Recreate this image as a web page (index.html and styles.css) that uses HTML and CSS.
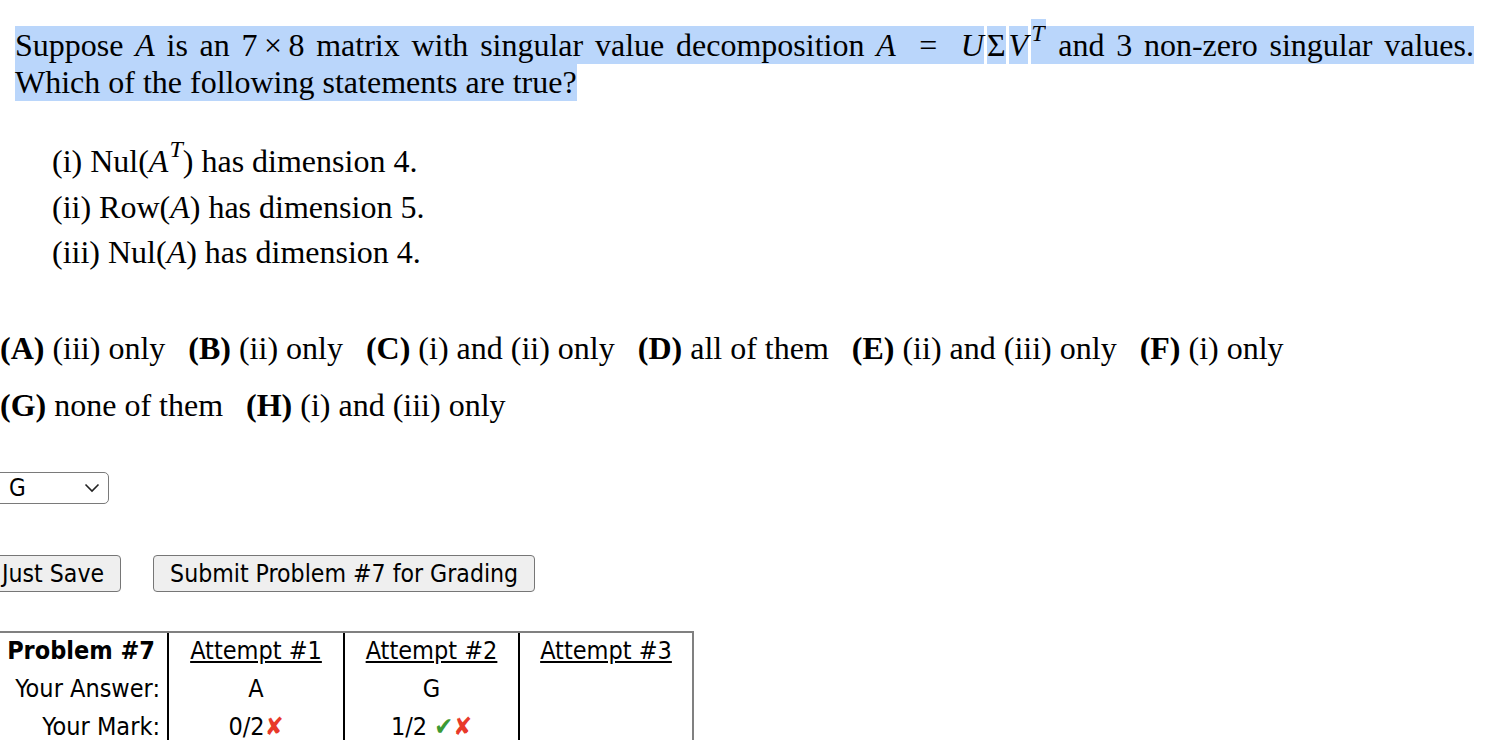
FILE: index.html
```html
<!DOCTYPE html>
<html>
<head>
<meta charset="utf-8">
<link rel="stylesheet" href="styles.css">
</head>
<body>
<div class="page">
  <div class="question"><span class="hl">Suppose <i>A</i> is an 7&thinsp;×&thinsp;8 matrix with singular value decomposition <i>A</i> &nbsp;=&nbsp; <i>U</i></span><span class="hl gap">Σ</span><span class="hl gap"><i>V</i></span><span class="hl gap tsup"><sup class="t">T</sup></span><span class="hl"> and 3 non-zero singular values. Which of the following statements are true?</span></div>

  <div class="statements">
    <div>(i) Nul(<i>A</i><sup class="t2">T</sup>) has dimension 4.</div>
    <div>(ii) Row(<i>A</i>) has dimension 5.</div>
    <div>(iii) Nul(<i>A</i>) has dimension 4.</div>
  </div>

  <div class="options">
    <span class="opt"><b>(A)</b> (iii) only</span> <span class="opt"><b>(B)</b> (ii) only</span> <span class="opt"><b>(C)</b> (i) and (ii) only</span> <span class="opt"><b>(D)</b> all of them</span> <span class="opt"><b>(E)</b> (ii) and (iii) only</span> <span class="opt"><b>(F)</b> (i) only</span><br>
    <span class="opt"><b>(G)</b> none of them</span> <span class="opt"><b>(H)</b> (i) and (iii) only</span>
  </div>

  <div class="select"><span class="sel-val">G</span><svg class="chev" width="16" height="10" viewBox="0 0 16 10"><path d="M1.5 1.5 L8 8 L14.5 1.5" fill="none" stroke="#222" stroke-width="1.6"/></svg></div>

  <div class="buttons">
    <button class="btn save">Just Save</button>
    <button class="btn">Submit Problem #7 for Grading</button>
  </div>

  <table class="marks">
    <colgroup>
      <col class="c1"><col class="c2"><col class="c3"><col class="c4">
    </colgroup>
    <tr>
      <th class="lbl">Problem #7</th>
      <td><u>Attempt #1</u></td>
      <td><u>Attempt #2</u></td>
      <td><u>Attempt #3</u></td>
    </tr>
    <tr>
      <td class="lbl">Your Answer:</td>
      <td>A</td>
      <td>G</td>
      <td></td>
    </tr>
    <tr>
      <td class="lbl">Your Mark:</td>
      <td>0/2<span class="x">✘</span></td>
      <td>1/2 <span class="ok">✔</span><span class="x">✘</span></td>
      <td></td>
    </tr>
  </table>
</div>
</body>
</html>
```
FILE: styles.css
```css
html, body {
  margin: 0;
  padding: 0;
  background: #fff;
  overflow: hidden;
}
body {
  font-family: "Liberation Serif", "Times New Roman", serif;
  color: #000;
}
.page {
  width: 1490px;
}
.question {
  margin: 27px 16px 0 15px;
  font-size: 32px;
  line-height: 36.5px;
  text-align: justify;
}
.hl {
  background: #bad6fb;
  padding: 1px 0;
}
.gap {
  margin-left: 3px;
}
.tsup {
  padding-top: 8px;
}
.t {
  font-style: italic;
  font-size: 24px;
  vertical-align: 15px;
  line-height: 0;
  padding-right: 2px;
}
.statements {
  margin-top: 39px;
  padding-left: 52px;
  font-size: 32px;
  line-height: 45.5px;
}
.t2 {
  font-style: italic;
  font-size: 24px;
  vertical-align: 15px;
  line-height: 0;
  padding-left: 1px;
}
.options {
  margin-top: 44px;
  font-size: 32px;
  line-height: 57px;
}
.opt {
  white-space: nowrap;
  margin-right: 15px;
}
.select {
  margin-top: 38px;
  margin-left: -8px;
  width: 117px;
  height: 32px;
  box-sizing: border-box;
  border: 1px solid #7a7a7a;
  border-radius: 5px;
  display: flex;
  align-items: center;
  justify-content: space-between;
  padding: 0 8px 0 16px;
  font-family: "DejaVu Sans Condensed", "DejaVu Sans", sans-serif;
  font-stretch: condensed;
  font-size: 24px;
}
.buttons {
  margin-top: 51px;
  display: flex;
  gap: 32px;
  margin-left: -15px;
}
.btn {
  height: 37px;
  box-sizing: border-box;
  padding: 0 16px;
  background: #efefef;
  border: 1px solid #767676;
  border-radius: 4px;
  font-family: "DejaVu Sans Condensed", "DejaVu Sans", sans-serif;
  font-stretch: condensed;
  font-size: 24.6px;
  color: #000;
}
.marks {
  margin-top: 39px;
  margin-left: -4px;
  table-layout: fixed;
  width: 698px;
  border-collapse: separate;
  border-spacing: 0;
  border-top: 2px solid #808080;
  border-right: 2px solid #808080;
  font-family: "DejaVu Sans Condensed", "DejaVu Sans", sans-serif;
  font-stretch: condensed;
  font-size: 25px;
}
.c1 { width: 171px; }
.c2 { width: 176px; }
.c3 { width: 175px; }
.c4 { width: 174px; }
.marks td, .marks th {
  height: 38px;
  padding: 0 0 3px 0;
  text-align: center;
  border-left: 2px solid #000;
  font-weight: normal;
  box-sizing: border-box;
  white-space: nowrap;
}
.marks .lbl {
  border-left: none;
  padding-right: 7px;
  text-align: right;
}
.marks th.lbl {
  font-weight: bold;
  padding-right: 12px;
}
.ok {
  color: #3c9a34;
}
.x {
  color: #e8392a;
}
```
